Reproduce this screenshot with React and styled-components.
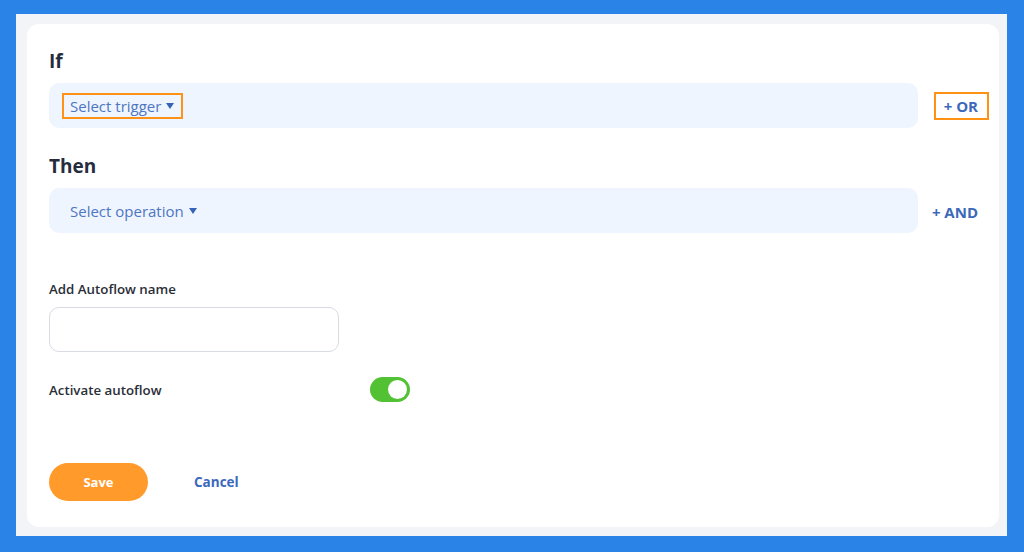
import React from 'react';
import styled, { createGlobalStyle } from 'styled-components';

const GlobalStyle = createGlobalStyle`
  html, body {
    margin: 0;
    padding: 0;
    background: #2a84e8;
    font-family: 'Open Sans', 'Noto Sans', sans-serif;
  }
  * { box-sizing: border-box; }
`;

// Styles
const Frame = styled.div`
  width: 1024px;
  height: 552px;
  padding: 14px 17px 16px 16px;
`;

const Panel = styled.div`
  height: 100%;
  background: #f3f4f8;
  padding: 10px 8px 9px 11px;
`;

const Card = styled.div`
  height: 100%;
  background: #ffffff;
  border-radius: 12px;
  padding: 25px 10px 0 22px;
  display: flex;
  flex-direction: column;
`;

const Heading = styled.h2`
  margin: 0 0 10px;
  font-size: 19px;
  line-height: 24px;
  font-weight: 700;
  color: #252c3d;
`;

const Row = styled.div`
  display: flex;
  align-items: center;
  margin-bottom: ${p => p.$spacing || 0}px;
`;

const Bar = styled.div`
  flex: 1;
  height: 45px;
  border-radius: 10px;
  background: #eef5fe;
  padding-left: 13px;
  display: flex;
  align-items: center;
`;

const Select = styled.div`
  display: flex;
  align-items: center;
  gap: 5px;
  height: 26px;
  padding: 0 7px 0 6px;
  border: 2px solid ${p => (p.$highlight ? '#ff9214' : 'transparent')};
  font-size: 15px;
  color: #4f76c2;
`;

const Caret = styled.span`
  width: 0;
  height: 0;
  border-left: 4px solid transparent;
  border-right: 4px solid transparent;
  border-top: 6px solid #3563b6;
  margin-top: 1px;
`;

const Side = styled.div`
  width: 71px;
  display: flex;
  justify-content: flex-end;
`;

const Link = styled.div`
  height: 28px;
  display: flex;
  align-items: center;
  padding: 0 9px 0 8px;
  border: 2px solid ${p => (p.$highlight ? '#ff9214' : 'transparent')};
  font-size: 15px;
  font-weight: 700;
  color: #3d69bb;
  margin-top: ${p => p.$offset || 0}px;
`;

const Label = styled.label`
  display: block;
  font-size: 13.3px;
  line-height: 18px;
  font-weight: 600;
  color: #2a2e38;
`;

const NameInput = styled.input`
  display: block;
  width: 290px;
  height: 45px;
  margin: 9px 0 25px;
  border: 1px solid #d8dbe1;
  border-radius: 10px;
  background: #fff;
  outline: none;
  font-family: inherit;
  font-size: 14px;
  padding: 0 12px;
`;

const ToggleRow = styled.div`
  width: 361px;
  display: flex;
  align-items: center;
  justify-content: space-between;
`;

const Toggle = styled.div`
  width: 40px;
  height: 25px;
  border-radius: 13px;
  background: #52c234;
  padding: 3px;
  display: flex;
  justify-content: ${p => (p.$on ? 'flex-end' : 'flex-start')};
`;

const Knob = styled.span`
  width: 19px;
  height: 19px;
  border-radius: 50%;
  background: #ffffff;
`;

const Actions = styled.div`
  display: flex;
  align-items: center;
  gap: 46px;
  margin-top: 61px;
`;

const SaveButton = styled.button`
  width: 99px;
  height: 38px;
  border: none;
  border-radius: 19px;
  background: #ff9a2b;
  color: #ffffff;
  font-family: inherit;
  font-size: 13px;
  font-weight: 700;
`;

const CancelButton = styled.button`
  border: none;
  background: none;
  padding: 0;
  color: #3b68bd;
  font-family: inherit;
  font-size: 13.5px;
  font-weight: 700;
`;

export default function App() {
  return (
    <Frame>
      <GlobalStyle />
      <Panel>
        <Card>
          <Heading>If</Heading>
          <Row $spacing={26}>
            <Bar>
              <Select $highlight>
                Select trigger <Caret />
              </Select>
            </Bar>
            <Side>
              <Link $highlight>+ OR</Link>
            </Side>
          </Row>

          <Heading>Then</Heading>
          <Row $spacing={47}>
            <Bar>
              <Select>
                Select operation <Caret />
              </Select>
            </Bar>
            <Side>
              <Link $offset={2}>+ AND</Link>
            </Side>
          </Row>

          <Label>Add Autoflow name</Label>
          <NameInput type="text" />

          <ToggleRow>
            <Label>Activate autoflow</Label>
            <Toggle $on>
              <Knob />
            </Toggle>
          </ToggleRow>

          <Actions>
            <SaveButton>Save</SaveButton>
            <CancelButton>Cancel</CancelButton>
          </Actions>
        </Card>
      </Panel>
    </Frame>
  );
}
